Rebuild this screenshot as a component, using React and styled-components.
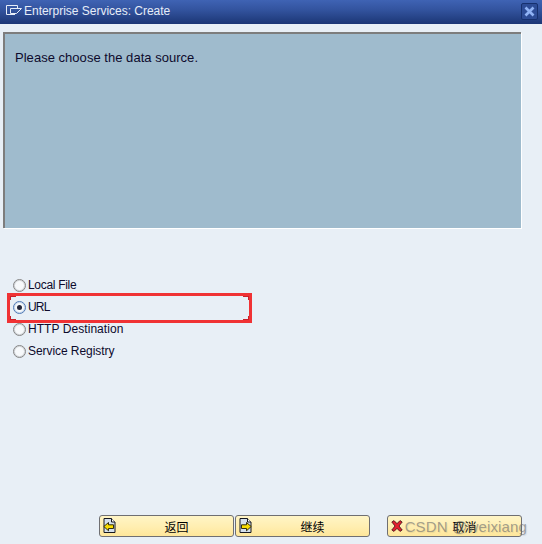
import React from 'react'
import styled, { createGlobalStyle } from 'styled-components'

const GlobalStyle = createGlobalStyle`
  html, body { margin: 0; padding: 0; background: #e8eff6; }
  #root { width: 542px; height: 544px; overflow: hidden; }
`

const Window = styled.div`
  position: relative;
  display: flex;
  flex-direction: column;
  width: 542px;
  height: 544px;
  background: #e8eff6;
  font-family: "Liberation Sans", Arial, "Noto Sans CJK SC", sans-serif;
  font-size: 12px;
  color: #0d0a2c;
`
const TitleBar = styled.div`
  display: flex;
  align-items: center;
  height: 24px;
  padding: 0 4px 3px 6px;
  box-sizing: border-box;
  background: linear-gradient(180deg, #3f63b4 0%, #33549f 40%, #1c3675 100%);
  color: #e6edf8;
`
const TitleText = styled.span`
  margin-left: 2px;
  letter-spacing: -0.02px;
`
const CloseButton = styled.div`
  display: flex;
  align-items: center;
  justify-content: center;
  margin-left: auto;
  margin-top: 1px;
  width: 15px;
  height: 15px;
  border: 1px solid #16306e;
  border-radius: 2px;
  background: #2d4c96;
`
const Panel = styled.div`
  margin: 8px 21px 0 3px;
  height: 196px;
  box-sizing: border-box;
  padding: 17px 10px;
  background: #9fbbcd;
  border-top: 2px solid #7d7d7d;
  border-left: 2px solid #7d7d7d;
  box-shadow: 1px 1px 0 #fff;
  font-size: 13px;
  line-height: 14px;
  letter-spacing: 0.03px;
`
const RadioGroup = styled.div`
  display: flex;
  flex-direction: column;
  margin: 46px 0 0 13px;
`
const RadioRow = styled.div`
  position: relative;
  display: flex;
  align-items: center;
  height: 22px;
  gap: 2px;
`
const RadioLabel = styled.span`
  letter-spacing: ${p => p.$spacing || 0}px;
`
const RadioDot = styled.span`
  display: flex;
  align-items: center;
  justify-content: center;
  width: 11px;
  height: 11px;
  border-radius: 50%;
  border: 1px solid ${p => (p.$on ? '#4f79b5' : '#858585')};
  background: #f7f9fb;
  box-shadow: inset 0 0 0 1px ${p => (p.$on ? '#c9d8ec' : '#d3d6da')};
  &::after {
    content: "";
    display: ${p => (p.$on ? 'block' : 'none')};
    width: 5px;
    height: 5px;
    border-radius: 50%;
    background: #23263a;
  }
`
const Highlight = styled.div`
  position: absolute;
  left: -6px;
  top: -3px;
  width: 239px;
  height: 24px;
  border: 3px solid #f03234;
  pointer-events: none;
`
const Corner = styled.span`
  position: absolute;
  width: 5px;
  height: 3px;
  ${p => (p.$right ? 'right: 0;' : 'left: 0;')}
  ${p => (p.$bottom ? 'bottom: 0;' : 'top: 0;')}
  border: 0 solid #c8202a;
  ${p => (p.$bottom ? 'border-bottom-width: 1px;' : 'border-top-width: 1px;')}
  ${p => (p.$right ? 'border-right-width: 1px;' : 'border-left-width: 1px;')}
`
const Footer = styled.div`
  display: flex;
  margin-top: auto;
  padding: 0 20px 7px 99px;
`
const Button = styled.div`
  position: relative;
  display: flex;
  align-items: center;
  justify-content: center;
  box-sizing: border-box;
  width: 135px;
  height: 22px;
  padding-left: 20px;
  margin-left: ${p => p.$gap || 0}px;
  border: 1px solid #6f6f72;
  border-radius: 3px;
  background: linear-gradient(180deg, #fff5c6 0%, #ffeeb0 55%, #fee69a 100%);
  color: #000;
  font-size: 12px;
`
const ButtonIcon = styled.svg`
  position: absolute;
  left: 3px;
  top: ${p => p.$top}px;
  width: ${p => p.$size}px;
  height: ${p => (p.$size === 13 ? 15 : 12)}px;
`
const Watermark = styled.div`
  position: absolute;
  right: 15px;
  bottom: 9px;
  font-size: 15px;
  letter-spacing: 0.15px;
  color: rgba(110, 110, 110, 0.62);
  text-shadow: 1px 1px 1px rgba(0, 0, 0, 0.08);
  pointer-events: none;
`

const DocIcon = ({ back }) => (
  <ButtonIcon viewBox="0 0 13 15" $size={13} $top={2}>
    <path d="M1 0.5H8.5L12 4V14.5H1Z" fill="#d5e0ec" stroke="#14161f" />
    <path d="M8.5 0.5V4H12" fill="#fff" stroke="#14161f" />
    {back
      ? <path d="M0.8 8.5L5.5 4.5V6.8H10.5V10.5H5.5V12.8Z" fill="#f7dc00" stroke="#1e1b00" strokeWidth="0.9" />
      : <path d="M12.2 8.5L7.5 4.5V6.8H2.5V10.5H7.5V12.8Z" fill="#f7dc00" stroke="#1e1b00" strokeWidth="0.9" />}
  </ButtonIcon>
)

const CancelIcon = () => (
  <ButtonIcon viewBox="0 0 12 12" $size={12} $top={4}>
    <path d="M0.8 2L3 0.6L6 3.6L9 0.6L11.2 2L8 6L11.2 10L9 11.4L6 8.4L3 11.4L0.8 10L4 6Z" fill="#e3212f" stroke="#3a1018" strokeWidth="0.8" />
  </ButtonIcon>
)

const App = () => (
  <Window>
    <GlobalStyle />
    <TitleBar>
      <svg width="16" height="11" viewBox="0 0 16 11" fill="none" stroke="#e6edf8" strokeWidth="1">
        <path d="M0.5 0.5H11.5V3" />
        <path d="M0.5 0.5V9.5" />
        <path d="M0.5 9.5H9" />
        <path d="M4.5 3.5H15.5L10.5 8.5H4.5Z" />
      </svg>
      <TitleText>Enterprise Services: Create</TitleText>
      <CloseButton>
        <svg width="11" height="11" viewBox="0 0 11 11" fill="none" stroke="#8fb2f5" strokeWidth="2.6">
          <path d="M1.5 1.5L9.5 9.5M9.5 1.5L1.5 9.5" />
        </svg>
      </CloseButton>
    </TitleBar>
    <Panel>Please choose the data source.</Panel>
    <RadioGroup>
      <RadioRow><RadioDot /><RadioLabel $spacing={-0.3}>Local File</RadioLabel></RadioRow>
      <RadioRow>
        <RadioDot $on /><RadioLabel $spacing={-0.8}>URL</RadioLabel>
        <Highlight>
          <Corner />
          <Corner $right />
          <Corner $bottom />
          <Corner $right $bottom />
        </Highlight>
      </RadioRow>
      <RadioRow><RadioDot /><RadioLabel $spacing={0.06}>HTTP Destination</RadioLabel></RadioRow>
      <RadioRow><RadioDot /><RadioLabel $spacing={-0.06}>Service Registry</RadioLabel></RadioRow>
    </RadioGroup>
    <Footer>
      <Button><DocIcon back />返回</Button>
      <Button $gap={1}><DocIcon />继续</Button>
      <Button $gap={17}><CancelIcon />取消</Button>
    </Footer>
    <Watermark>CSDN @weixiang</Watermark>
  </Window>
)

export default App
